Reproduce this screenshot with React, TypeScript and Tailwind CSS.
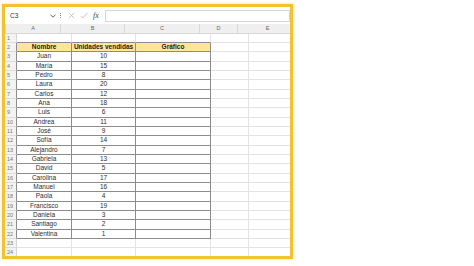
import React from "react";

const rows: [string, number][] = [
  ["Juan", 10],
  ["María", 15],
  ["Pedro", 8],
  ["Laura", 20],
  ["Carlos", 12],
  ["Ana", 18],
  ["Luis", 6],
  ["Andrea", 11],
  ["José", 9],
  ["Sofía", 14],
  ["Alejandro", 7],
  ["Gabriela", 13],
  ["David", 5],
  ["Carolina", 17],
  ["Manuel", 16],
  ["Paola", 4],
  ["Francisco", 19],
  ["Daniela", 3],
  ["Santiago", 2],
  ["Valentina", 1],
];

const cols = [
  { key: "A", w: "w-[55px]" },
  { key: "B", w: "w-[64px]" },
  { key: "C", w: "w-[75px]" },
  { key: "D", w: "w-[38px]" },
  { key: "E", w: "w-[60px]" },
];

function cellText(r: number, c: number): string {
  if (r === 2) return ["Nombre", "Unidades vendidas", "Gráfico"][c] ?? "";
  if (r >= 3 && r <= 22) {
    const d = rows[r - 3];
    if (c === 0) return d[0];
    if (c === 1) return String(d[1]);
  }
  return "";
}

function Toolbar() {
  return (
    <div className="flex h-[17px] items-center bg-white">
      <div className="w-[44px] pl-[5px] text-[6.5px] text-[#333]">C3</div>
      <svg width="6" height="4" viewBox="0 0 6 4" className="ml-[1px]">
        <path d="M0.5 0.8 L3 3.2 L5.5 0.8" fill="none" stroke="#555" strokeWidth="0.9" />
      </svg>
      <div className="ml-[4px] flex flex-col gap-[1px]">
        <div className="h-[1px] w-[1px] bg-[#888]" />
        <div className="h-[1px] w-[1px] bg-[#888]" />
        <div className="h-[1px] w-[1px] bg-[#888]" />
      </div>
      <svg width="7" height="7" viewBox="0 0 7 7" className="ml-[7px]">
        <path d="M0.8 0.8 L6.2 6.2 M6.2 0.8 L0.8 6.2" stroke="#b5b5b5" strokeWidth="0.8" />
      </svg>
      <svg width="8" height="7" viewBox="0 0 8 7" className="ml-[5px]">
        <path d="M0.6 3.8 L2.8 6 L7.4 0.8" fill="none" stroke="#b5b5b5" strokeWidth="0.8" />
      </svg>
      <div className="ml-[5px] text-[8px] italic text-[#444]" style={{ fontFamily: '"Liberation Serif", serif' }}>
        fx
      </div>
      <div className="ml-[6px] h-[12px] flex-1 border border-[#d6d6d6] bg-white" />
    </div>
  );
}

export default function App() {
  return (
    <div className="h-[266px] w-[474px] bg-white pl-[2px] pt-[4px]" style={{ fontFamily: '"Liberation Sans", Arial, sans-serif' }}>
      <div className="h-[255px] w-[291px] overflow-hidden border-[3px] border-[#f3c232] bg-white shadow-[0_0_3px_rgba(243,194,50,0.55)]">
        <Toolbar />
        <div className="flex h-[9.5px] bg-[#efefef]">
          <div className="w-[12px] border-r border-b border-[#d4d4d4] bg-[#e9e9e9]" />
          {cols.map((c) => (
            <div
              key={c.key}
              className={`${c.w} shrink-0 border-r border-b border-[#d8d8d8] text-center text-[5.5px] leading-[9px] text-[#666]`}
            >
              {c.key}
            </div>
          ))}
        </div>
        {Array.from({ length: 24 }, (_, i) => i + 1).map((r) => {
          const inTable = r >= 2 && r <= 22;
          return (
            <div key={r} className="flex h-[9.35px]">
              <div
                className={`w-[12px] shrink-0 border-b border-[#dcdcdc] bg-[#f3f3f3] pl-[2px] text-[5.5px] leading-[9px] text-[#777] ${
                  inTable ? "border-r border-r-[#8c8c8c]" : "border-r border-r-[#d4d4d4]"
                }`}
              >
                {r}
              </div>
              {cols.map((c, ci) => {
                const t = ci < 3;
                const dark = t && inTable;
                const topEdge = t && r === 1;
                const header = t && r === 2;
                return (
                  <div
                    key={c.key}
                    className={`${c.w} shrink-0 overflow-hidden whitespace-nowrap border-r border-b text-center text-[6.5px] leading-[8.5px] ${
                      dark ? "border-[#8c8c8c]" : topEdge ? "border-r-[#e3e3e3] border-b-[#8c8c8c]" : "border-[#e3e3e3]"
                    } ${header ? "bg-[#ffe599] font-bold text-[#222]" : "text-[#2e2e2e]"}`}
                  >
                    {cellText(r, ci)}
                  </div>
                );
              })}
            </div>
          );
        })}
      </div>
    </div>
  );
}
